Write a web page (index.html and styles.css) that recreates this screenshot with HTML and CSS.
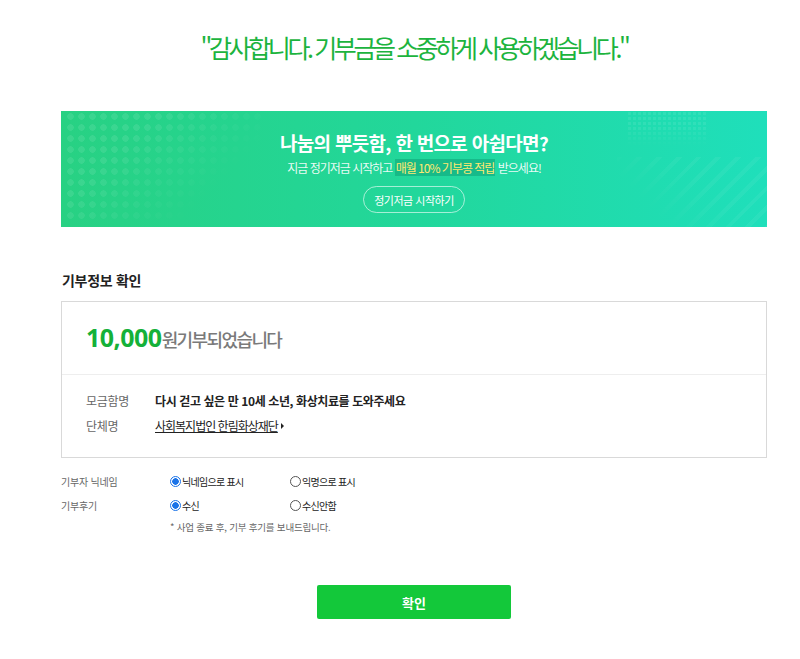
FILE: index.html
```html
<!DOCTYPE html>
<html lang="ko">
<head>
<meta charset="utf-8">
<link rel="stylesheet" href="styles.css">
</head>
<body>
<div class="wrap">
  <h1 class="thanks">"감사합니다. 기부금을 소중하게 사용하겠습니다."</h1>

  <div class="banner">
    <div class="dots dots-left"></div>
    <div class="dots dots-right"></div>
    <div class="stripes"></div>
    <div class="banner-body">
      <p class="banner-title">나눔의 뿌듯함, 한 번으로 아쉽다면?</p>
      <p class="banner-sub">지금 정기저금 시작하고 <span class="hl">매월 10% 기부콩 적립</span> 받으세요!</p>
      <span class="banner-btn">정기저금 시작하기</span>
    </div>
  </div>

  <h2 class="section-title">기부정보 확인</h2>
  <div class="info-box">
    <div class="amount"><span class="num">10,000</span><span class="txt">원기부되었습니다</span></div>
    <div class="details">
      <div class="row"><span class="key">모금함명</span><span class="val strong">다시 걷고 싶은 만 10세 소년, 화상치료를 도와주세요</span></div>
      <div class="row"><span class="key">단체명</span><span class="val"><a class="org">사회복지법인 한림화상재단</a><span class="arrow"></span></span></div>
    </div>
  </div>

  <div class="options">
    <div class="opt-row">
      <span class="opt-label">기부자 닉네임</span>
      <label class="radio"><span class="dot on"></span>닉네임으로 표시</label>
      <label class="radio"><span class="dot"></span>익명으로 표시</label>
    </div>
    <div class="opt-row">
      <span class="opt-label">기부후기</span>
      <label class="radio"><span class="dot on"></span>수신</label>
      <label class="radio"><span class="dot"></span>수신안함</label>
    </div>
    <p class="note">* 사업 종료 후, 기부 후기를 보내드립니다.</p>
  </div>

  <div class="actions">
    <button class="confirm">확인</button>
  </div>
</div>
</body>
</html>
```

FILE: styles.css
```css
* { box-sizing: border-box; }
html, body { margin: 0; padding: 0; background: #fff; }
body {
  font-family: "Noto Sans CJK KR", "Noto Sans", sans-serif;
  color: #222;
}
.wrap {
  width: 706px;
  margin-left: 61px;
  padding-top: 28px;
}
.thanks {
  margin: 0;
  text-align: center;
  font-size: 25px;
  font-weight: 400;
  letter-spacing: -3.4px;
  line-height: 38px;
  color: #1cb43e;
}
.banner {
  position: relative;
  overflow: hidden;
  margin-top: 45px;
  height: 116px;
  background: linear-gradient(90deg, #28d183 0%, #22d79b 50%, #1fdfbb 100%);
}
.dots {
  position: absolute;
  background-image: radial-gradient(circle, rgba(255,255,255,0.09) 3px, transparent 3.6px);
  background-size: 11px 11px;
}
.dots-left {
  left: 4px; top: 0; width: 200px; height: 110px;
  -webkit-mask-image: linear-gradient(135deg, #000 30%, transparent 75%);
  mask-image: linear-gradient(135deg, #000 30%, transparent 75%);
}
.dots-right {
  left: 566px; top: 0; width: 80px; height: 36px;
  background-image: radial-gradient(circle, rgba(255,255,255,0.08) 1.6px, transparent 2px);
  background-size: 5px 5px;
  -webkit-mask-image: linear-gradient(180deg, #000 40%, transparent 100%);
  mask-image: linear-gradient(180deg, #000 40%, transparent 100%);
}
.stripes {
  position: absolute;
  right: 0; bottom: 0; width: 150px; height: 70px;
  background-image: repeating-linear-gradient(135deg, rgba(255,255,255,0.05) 0 4px, transparent 4px 14px);
  -webkit-mask-image: linear-gradient(45deg, transparent 20%, #000 60%);
  mask-image: linear-gradient(45deg, transparent 20%, #000 60%);
}
.banner-body {
  position: relative;
  display: flex;
  flex-direction: column;
  align-items: center;
  padding-top: 19px;
  color: #fff;
}
.banner-title {
  margin: 0;
  font-size: 19px;
  font-weight: 700;
  letter-spacing: -0.7px;
  line-height: 26px;
}
.banner-sub {
  margin: 3px 0 0;
  font-size: 12px;
  letter-spacing: -1px;
  line-height: 18px;
  color: rgba(255,255,255,0.92);
}
.hl {
  color: #ffe970;
  background: rgba(10,150,110,0.45);
  padding: 0 1px;
}
.banner-btn {
  margin-top: 9px;
  display: inline-flex;
  align-items: center;
  justify-content: center;
  width: 102px;
  height: 27px;
  border: 1px solid rgba(255,255,255,0.6);
  border-radius: 14px;
  font-size: 11px;
  letter-spacing: -0.5px;
  color: #fff;
}
.section-title {
  margin: 43px 0 0 1px;
  font-size: 14px;
  font-weight: 700;
  line-height: 20px;
  color: #222;
  letter-spacing: -0.3px;
}
.info-box {
  margin-top: 11px;
  border: 1px solid #d9d9d9;
  height: 157px;
}
.amount {
  height: 73px;
  display: flex;
  align-items: baseline;
  padding: 19px 0 0 24px;
  border-bottom: 1px solid #eeeeee;
}
.num {
  font-family: "Noto Sans", sans-serif;
  font-size: 25px;
  font-weight: 700;
  color: #14b139;
  letter-spacing: -0.5px;
  line-height: 32px;
}
.txt {
  font-size: 18px;
  font-weight: 500;
  color: #7a7a7a;
  letter-spacing: -1.6px;
}
.details {
  padding: 17px 0 0 24px;
  display: flex;
  flex-direction: column;
  gap: 7px;
}
.row {
  display: flex;
  font-size: 12px;
  line-height: 18px;
}
.key {
  width: 69px;
  color: #666;
  letter-spacing: -0.3px;
}
.val { color: #222; letter-spacing: -0.4px; display: inline-flex; align-items: center; }
.val.strong { font-weight: 700; }
.org {
  color: #222;
  text-decoration: underline;
  letter-spacing: -1px;
}
.arrow {
  display: inline-block;
  margin-left: 3px;
  border-left: 3px solid #222;
  border-top: 3px solid transparent;
  border-bottom: 3px solid transparent;
}
.options {
  margin-top: 11px;
  font-size: 10px;
  color: #444;
}
.opt-row {
  display: flex;
  align-items: center;
  height: 24px;
}
.opt-label {
  width: 109px;
  color: #666;
  letter-spacing: -0.2px;
}
.radio {
  width: 120px;
  display: inline-flex;
  align-items: center;
  color: #222;
  letter-spacing: -0.7px;
}
.dot {
  width: 11px;
  height: 11px;
  border: 1px solid #555;
  border-radius: 50%;
  margin-right: 1px;
  display: inline-block;
  background: #fff;
}
.dot.on {
  border-color: #1a73e8;
  background: radial-gradient(circle, #1a73e8 0 3px, #fff 3.5px);
}
.note {
  margin: 3px 0 0 109px;
  color: #666;
  font-size: 9.5px;
  letter-spacing: -0.2px;
}
.actions {
  display: flex;
  justify-content: center;
  margin-top: 51px;
}
.confirm {
  width: 194px;
  height: 34px;
  border: 0;
  border-radius: 2px;
  background: #13c83a;
  color: #fff;
  font-family: "Noto Sans CJK KR", sans-serif;
  font-size: 13px;
  font-weight: 700;
}
```
